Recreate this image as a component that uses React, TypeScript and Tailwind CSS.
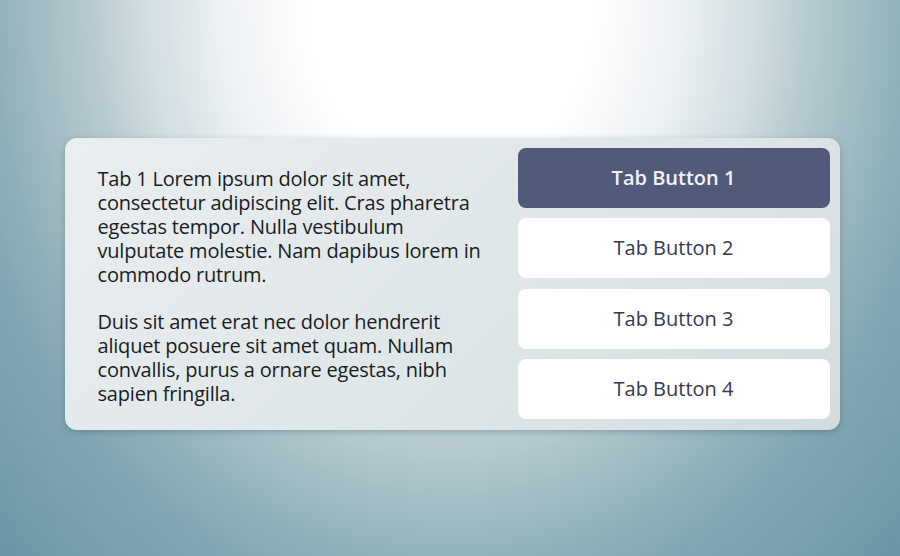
import React, { useState } from "react";

const tabs = ["Tab Button 1", "Tab Button 2", "Tab Button 3", "Tab Button 4"];

export default function App() {
  const [active, setActive] = useState(0);

  return (
    <div className="w-[900px] h-[556px] flex items-center justify-center bg-[radial-gradient(ellipse_500px_620px_at_50%_0%,#ffffff_0%,#ffffff_28%,#eef2f4_45%,#d3dfe3_60%,#bccdd3_70%,#a6bfc5_80%,#93b2ba_90%,#82a7b2_100%,#6a94a2_130%)] font-['Open_Sans',sans-serif]">
      <div className="w-[775px] h-[292px] mt-[12px] ml-[4px] flex rounded-xl bg-[linear-gradient(135deg,#e9eef0_0%,#dfe6e8_60%,#d2dcdf_100%)] shadow-[0_2px_6px_rgba(40,70,80,0.3)] p-[10px]">
        {/* Content */}
        <div className="flex-1 flex flex-col justify-center pt-[4px] pl-[23px] pr-[28px] text-[20px] leading-[24px] text-[#1a1c21] tracking-[-0.2px]">
          <p>
            {`Tab ${active + 1} Lorem ipsum dolor sit amet, consectetur adipiscing elit. Cras pharetra egestas tempor. Nulla vestibulum vulputate molestie. Nam dapibus lorem in commodo rutrum.`}
          </p>
          <p className="mt-[23px]">
            Duis sit amet erat nec dolor hendrerit aliquet posuere sit amet quam. Nullam convallis, purus a ornare egestas, nibh sapien fringilla.
          </p>
        </div>

        {/* Buttons */}
        <div className="w-[312px] flex flex-col gap-[10.33px]">
          {tabs.map((t, i) => (
            <button
              key={t}
              onClick={() => setActive(i)}
              className={`h-[60px] rounded-lg text-[20px] ${
                active === i
                  ? "bg-[#525a7c] text-[#f3f3f6] font-semibold"
                  : "bg-white text-[#353a4e]"
              }`}
            >
              {t}
            </button>
          ))}
        </div>
      </div>
    </div>
  );
}
